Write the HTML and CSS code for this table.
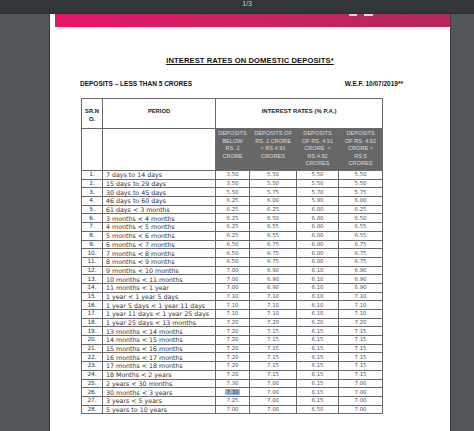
FILE: index.html
```html
<!DOCTYPE html>
<html>
<head>
<meta charset="utf-8">
<link rel="stylesheet" href="styles.css">
</head>
<body>
<div class="toolbar"><span class="pagenum">1/3</span></div>
<div class="viewer">
  <div class="page">
    <div class="banner"><span class="mark m1"></span><span class="mark m2"></span></div>
    <div class="title">INTEREST RATES ON DOMESTIC DEPOSITS*</div>
    <div class="subhead"><span>DEPOSITS – LESS THAN 5 CRORES</span><span>W.E.F. 10/07/2019**</span></div>
    <table class="rates">
      <colgroup>
        <col class="c-sr"><col class="c-period"><col class="c1"><col class="c2"><col class="c3"><col class="c4">
      </colgroup>
      <thead>
        <tr class="h1">
          <th>SR.N<br>O.</th>
          <th>PERIOD</th>
          <th colspan="4" class="ir">INTEREST RATES (% P.A.)</th>
        </tr>
        <tr class="h2">
          <th></th>
          <th></th>
          <th class="g">DEPOSITS<br>BELOW<br>RS. 2<br>CRORE</th>
          <th class="g">DEPOSITS OF<br>RS. 2 CRORE<br>&lt; RS.4.91<br>CRORES</th>
          <th class="g">DEPOSITS<br>OF RS. 4.91<br>CRORE &nbsp;&lt;<br>RS.4.92<br>CRORES</th>
          <th class="g">DEPOSITS<br>OF RS. 4.92<br>CRORE &lt;<br>RS.5<br>CRORES</th>
        </tr>
      </thead>
      <tbody>
        <tr><td>1.</td><td class="p">7 days to 14 days</td><td>3.50</td><td>5.50</td><td>5.50</td><td>5.50</td></tr>
        <tr><td>2.</td><td class="p">15 days to 29 days</td><td>3.50</td><td>5.50</td><td>5.50</td><td>5.50</td></tr>
        <tr><td>3.</td><td class="p">30 days to 45 days</td><td>5.50</td><td>5.75</td><td>5.70</td><td>5.75</td></tr>
        <tr><td>4.</td><td class="p">46 days to 60 days</td><td>6.25</td><td>6.00</td><td>5.90</td><td>6.00</td></tr>
        <tr><td>5.</td><td class="p">61 days &lt; 3 months</td><td>6.25</td><td>6.25</td><td>6.00</td><td>6.25</td></tr>
        <tr><td>6.</td><td class="p">3 months &lt; 4 months</td><td>6.25</td><td>6.50</td><td>6.00</td><td>6.50</td></tr>
        <tr><td>7.</td><td class="p">4 months &lt; 5 months</td><td>6.25</td><td>6.55</td><td>6.00</td><td>6.55</td></tr>
        <tr><td>8.</td><td class="p">5 months &lt; 6 months</td><td>6.25</td><td>6.55</td><td>6.00</td><td>6.55</td></tr>
        <tr><td>9.</td><td class="p">6 months &lt; 7 months</td><td>6.50</td><td>6.75</td><td>6.00</td><td>6.75</td></tr>
        <tr><td>10.</td><td class="p">7 months &lt; 8 months</td><td>6.50</td><td>6.75</td><td>6.00</td><td>6.75</td></tr>
        <tr><td>11.</td><td class="p">8 months &lt; 9 months</td><td>6.50</td><td>6.75</td><td>6.00</td><td>6.75</td></tr>
        <tr><td>12.</td><td class="p">9 months &lt; 10 months</td><td>7.00</td><td>6.90</td><td>6.10</td><td>6.90</td></tr>
        <tr><td>13.</td><td class="p">10 months &lt; 11 months</td><td>7.00</td><td>6.90</td><td>6.10</td><td>6.90</td></tr>
        <tr><td>14.</td><td class="p">11 months &lt; 1 year</td><td>7.00</td><td>6.90</td><td>6.10</td><td>6.90</td></tr>
        <tr><td>15.</td><td class="p">1 year &lt; 1 year 5 days</td><td>7.10</td><td>7.10</td><td>6.10</td><td>7.10</td></tr>
        <tr><td>16.</td><td class="p">1 year 5 days &lt; 1 year 11 days</td><td>7.10</td><td>7.10</td><td>6.10</td><td>7.10</td></tr>
        <tr><td>17.</td><td class="p">1 year 11 days &lt; 1 year 25 days</td><td>7.10</td><td>7.10</td><td>6.10</td><td>7.10</td></tr>
        <tr><td>18.</td><td class="p">1 year 25 days &lt; 13 months</td><td>7.20</td><td>7.20</td><td>6.20</td><td>7.20</td></tr>
        <tr><td>19.</td><td class="p">13 months &lt; 14 months</td><td>7.20</td><td>7.15</td><td>6.15</td><td>7.15</td></tr>
        <tr><td>20.</td><td class="p">14 months &lt; 15 months</td><td>7.20</td><td>7.15</td><td>6.15</td><td>7.15</td></tr>
        <tr><td>21.</td><td class="p">15 months &lt; 16 months</td><td>7.20</td><td>7.15</td><td>6.15</td><td>7.15</td></tr>
        <tr><td>22.</td><td class="p">16 months &lt; 17 months</td><td>7.20</td><td>7.15</td><td>6.15</td><td>7.15</td></tr>
        <tr><td>23.</td><td class="p">17 months &lt; 18 months</td><td>7.20</td><td>7.15</td><td>6.15</td><td>7.15</td></tr>
        <tr><td>24.</td><td class="p">18 Months &lt; 2 years</td><td>7.20</td><td>7.15</td><td>6.15</td><td>7.15</td></tr>
        <tr><td>25.</td><td class="p">2 years &lt; 30 months</td><td>7.30</td><td>7.00</td><td>6.15</td><td>7.00</td></tr>
        <tr><td>26.</td><td class="p">30 months &lt; 3 years</td><td><span class="sel">7.30</span></td><td>7.00</td><td>6.15</td><td>7.00</td></tr>
        <tr><td>27.</td><td class="p">3 years &lt; 5 years</td><td>7.25</td><td>7.00</td><td>6.15</td><td>7.00</td></tr>
        <tr><td>28.</td><td class="p">5 years to 10 years</td><td>7.00</td><td>7.00</td><td>6.50</td><td>7.00</td></tr>
      </tbody>
    </table>
  </div>
</div>
</body>
</html>
```

FILE: styles.css
```css
html, body {
  margin: 0;
  padding: 0;
}
body {
  width: 474px;
  height: 431px;
  overflow: hidden;
  background: #525659;
  font-family: "Liberation Sans", Arial, sans-serif;
}
.toolbar {
  height: 14px;
  background: #323639;
  border-bottom: 1px solid #2a2d30;
  box-sizing: border-box;
  display: flex;
  justify-content: center;
  overflow: hidden;
}
.pagenum {
  color: #d0d0d0;
  font-size: 7px;
  line-height: 7px;
  margin-top: 0;
  margin-left: 20px;
}
.viewer {
  padding-left: 50px;
}
.page {
  width: 400px;
  height: 417px;
  background: #fff;
  box-shadow: -1px 0 0 #3a3d40, 1px 0 0 #3a3d40;
  overflow: hidden;
}
.banner {
  margin-left: 5px;
  height: 13px;
  background: linear-gradient(90deg, #e8156b 0%, #c9225f 50%, #b2275c 100%);
  display: flex;
  padding-left: 294px;
  gap: 7px;
}
.mark {
  display: block;
  height: 2px;
  background: #f4d4df;
}
.m1 { width: 8px; }
.m2 { width: 9px; }
.title {
  margin-top: 29px;
  text-align: center;
  font-size: 7.6px;
  font-weight: bold;
  text-decoration: underline;
  color: #111;
  letter-spacing: 0.1px;
  line-height: 9px;
}
.subhead {
  margin: 15px 47px 0 30px;
  display: flex;
  justify-content: space-between;
  font-size: 6.5px;
  font-weight: bold;
  color: #111;
  line-height: 7px;
}
.rates {
  margin-top: 11px;
  margin-left: 31px;
  width: 301px;
  table-layout: fixed;
  border-collapse: collapse;
  border: 1px solid #3a3a3a;
  color: #333;
}
.c-sr { width: 21px; }
.c-period { width: 113px; }
.c1 { width: 34px; }
.c2 { width: 47px; }
.c3 { width: 42px; }
.c4 { width: 44px; }
.rates th, .rates td {
  border: 1px solid #6a6a6a;
  padding: 0;
  overflow: hidden;
  white-space: nowrap;
}
.h1 {
  height: 30px;
}
.h1 th {
  font-size: 5.8px;
  font-weight: bold;
  color: #222;
  line-height: 7.5px;
  vertical-align: top;
  padding-top: 9px;
  text-align: center;
}
.h1 th.ir {
  font-size: 6px;
}
.h2 {
  height: 42px;
}
.h2 th {
  font-weight: normal;
  vertical-align: top;
}
.h2 th.g {
  background: #676767;
  color: #dcdcdc;
  font-size: 5.6px;
  line-height: 7.6px;
  padding-top: 1px;
  text-align: center;
}
tbody tr {
  height: 8.7px;
}
tbody td {
  font-family: "DejaVu Sans", "Liberation Sans", sans-serif;
  font-size: 5.4px;
  line-height: 7px;
  text-align: center;
  color: #555;
}
tbody td:first-child {
  color: #333;
  font-size: 5.8px;
}
tbody td.p {
  text-align: left;
  padding-left: 3px;
  font-size: 6.3px;
  color: #333;
}
.sel {
  background: #9bb9dc;
  color: #334;
  padding: 0 1px;
}
```
